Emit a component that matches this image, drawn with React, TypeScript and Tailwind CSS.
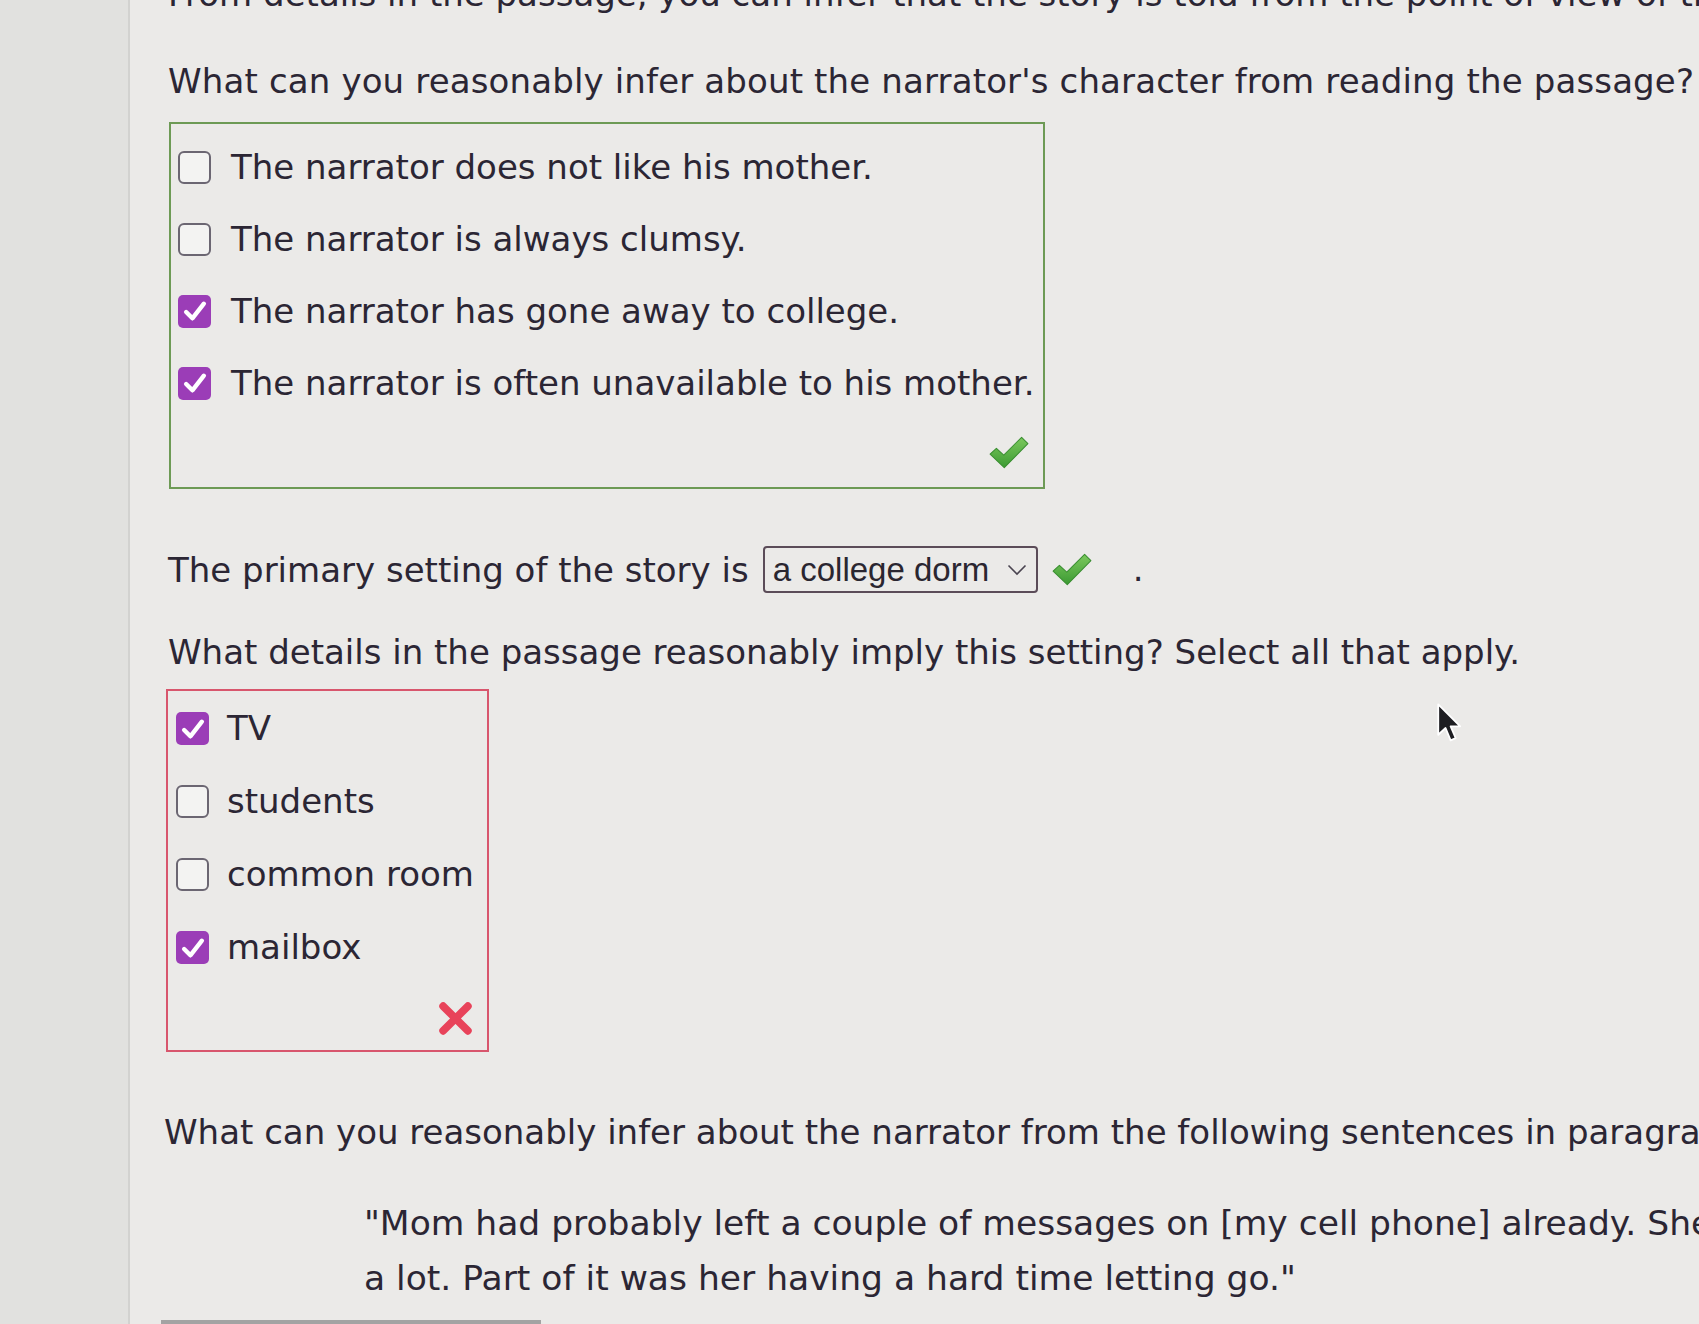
import React from 'react';

function Box({ checked }: { checked: boolean }) {
  if (checked) {
    return (
      <div className="flex h-[33px] w-[33px] shrink-0 items-center justify-center rounded-[5px] bg-[#9b3db7]">
        <svg width="24" height="22" viewBox="0 0 23 21">
          <path d="M3 11.5 L9 17.5 L20 3.5" fill="none" stroke="#ffffff" strokeWidth="4.2" strokeLinecap="round" strokeLinejoin="round" />
        </svg>
      </div>
    );
  }
  return <div className="h-[33px] w-[33px] shrink-0 rounded-[6px] border-2 border-[#6b6672] bg-[#f3f3f2]" />;
}

function GreenCheck() {
  return (
    <svg width="42" height="35" viewBox="0 0 40 33">
      <defs>
        <linearGradient id="g" x1="0" y1="0" x2="0" y2="1">
          <stop offset="0" stopColor="#7cc95d" />
          <stop offset="1" stopColor="#3c9a33" />
        </linearGradient>
      </defs>
      <path d="M2 18 L8 12.5 L15 19 L32 2 L38 8 L15.5 31 Z" fill="url(#g)" stroke="#3a8f31" strokeWidth="1" strokeLinejoin="round" />
    </svg>
  );
}

function RedX() {
  return (
    <svg width="35" height="35" viewBox="0 0 34 34">
      <path d="M5 5 L29 29 M29 5 L5 29" stroke="#e8435a" strokeWidth="7.5" strokeLinecap="round" />
    </svg>
  );
}

const first = [
  { label: 'The narrator does not like his mother.', checked: false },
  { label: 'The narrator is always clumsy.', checked: false },
  { label: 'The narrator has gone away to college.', checked: true },
  { label: 'The narrator is often unavailable to his mother.', checked: true },
];

const second = [
  { label: 'TV', checked: true },
  { label: 'students', checked: false },
  { label: 'common room', checked: false },
  { label: 'mailbox', checked: true },
];

export default function App() {
  return (
    <div className="relative flex h-[1324px] w-[1699px] overflow-hidden bg-[#ebeae8] font-['DejaVu_Sans',sans-serif] text-[34px] text-[#2b2634]">
      <div className="w-[130px] shrink-0 border-r-2 border-[#d2d2d0] bg-[#e1e1df]" />
      <div className="flex min-w-0 flex-1 flex-col whitespace-nowrap pl-[38px]">
        <p className="-mt-[26px] leading-[40px]">
          From details in the passage, you can infer that the story is told from the point of view of the narrator.
        </p>

        <p className="mt-[47px] leading-[40px] tracking-[0.15px]">
          What can you reasonably infer about the narrator's character from reading the passage?
        </p>

        <div className="ml-[1px] mt-[21px] flex h-[367px] w-[876px] flex-col border-2 border-[#6d9a55] pl-[7px] pt-[7px]">
          {first.map((item) => (
            <div key={item.label} className="flex h-[72px] items-center gap-[20px]">
              <Box checked={item.checked} />
              <span>{item.label}</span>
            </div>
          ))}
          <div className="flex justify-end pr-[13px] pt-[16px]">
            <GreenCheck />
          </div>
        </div>

        <div className="mt-[57px] flex h-[47px] items-center">
          <span className="leading-[40px]">The primary setting of the story is</span>
          <div className="ml-[14px] flex h-[47px] w-[275px] items-center justify-between rounded-[4px] border-2 border-[#5b4c58] pl-[8px] pr-[9px] font-['Liberation_Sans',Arial,sans-serif] text-[33px] text-[#2a2630]">
            <span>a college dorm</span>
            <svg width="20" height="12" viewBox="0 0 20 12">
              <path d="M1.5 1.5 L10 10 L18.5 1.5" fill="none" stroke="#4a4450" strokeWidth="1.6" />
            </svg>
          </div>
          <div className="ml-[13px]">
            <GreenCheck />
          </div>
          <span className="ml-[40px]">.</span>
        </div>

        <p className="mt-[39px] leading-[40px]">
          What details in the passage reasonably imply this setting? Select all that apply.
        </p>

        <div className="-ml-[2px] mt-[17px] flex h-[363px] w-[323px] flex-col border-2 border-[#d8566d] pl-[8px] pt-[1px]">
          {second.map((item) => (
            <div key={item.label} className="flex h-[73px] items-center gap-[18px]">
              <Box checked={item.checked} />
              <span>{item.label}</span>
            </div>
          ))}
          <div className="flex justify-end pr-[14px] pt-[17px]">
            <RedX />
          </div>
        </div>

        <p className="-ml-[4px] mt-[60px] leading-[40px]">
          What can you reasonably infer about the narrator from the following sentences in paragraph 3?
        </p>

        <p className="ml-[196px] mt-[44px] text-[34.5px] leading-[55px]">
          "Mom had probably left a couple of messages on [my cell phone] already. She worried
          <br />
          a lot. Part of it was her having a hard time letting go."
        </p>

        <div className="-ml-[7px] mt-[14px] h-[4px] w-[380px] shrink-0 bg-[#a3a3a3]" />
      </div>

      <svg className="absolute left-[1436px] top-[702px]" width="27" height="43" viewBox="0 0 24 38">
        <path d="M2 2 L2 29 L8.5 23 L13 34 L17.5 32 L13 21.5 L21.5 21.5 Z" fill="#1e1e22" stroke="#ffffff" strokeWidth="1.6" strokeLinejoin="round" />
      </svg>
    </div>
  );
}
